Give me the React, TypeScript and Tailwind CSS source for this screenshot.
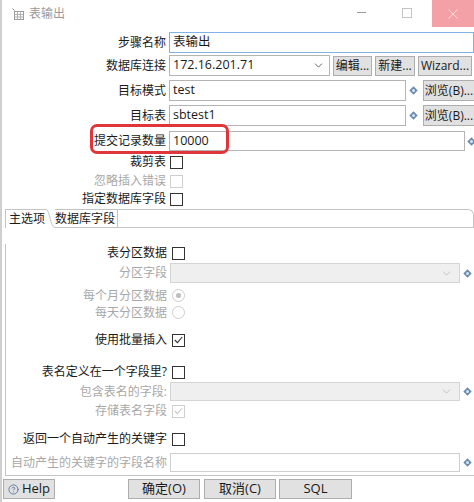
import { ChevronDown, CircleHelp } from "lucide-react";
import type { ReactNode } from "react";

// Small blue marker shown after fields that accept variables
function VarMark() {
  return (
    <svg width="9" height="9" viewBox="0 0 9 9" className="shrink-0">
      <path d="M4.5 0.3 L8.7 4.5 L4.5 8.7 L0.3 4.5 Z" fill="#6a8cb2" />
      <circle cx="4.5" cy="4.5" r="1.5" fill="#d6e4f2" />
    </svg>
  );
}

function Check({ checked = false, disabled = false }: { checked?: boolean; disabled?: boolean }) {
  return (
    <span
      className={`flex h-[13px] w-[13px] shrink-0 items-center justify-center border bg-white ${
        disabled ? "border-[#cfcfcf]" : "border-[#333333]"
      }`}
    >
      {checked && (
        <svg width="9" height="8" viewBox="0 0 9 8">
          <path d="M0.8 4 L3.4 6.6 L8.2 1" fill="none" stroke={disabled ? "#c8c8c8" : "#333333"} strokeWidth="1.1" />
        </svg>
      )}
    </span>
  );
}

function Radio({ checked = false }: { checked?: boolean }) {
  return (
    <span className="flex h-[13px] w-[13px] shrink-0 items-center justify-center rounded-full border border-[#cfcfcf] bg-white">
      {checked && <span className="h-[5px] w-[5px] rounded-full bg-[#bdbdbd]" />}
    </span>
  );
}

function Btn({ children, className = "" }: { children: ReactNode; className?: string }) {
  return (
    <div
      className={`flex items-center justify-center border border-[#adadad] bg-[#e1e1e1] text-[12px] text-[#1a1a1a] ${className}`}
    >
      {children}
    </div>
  );
}

// Label column + control, top part of the dialog
function Row({ label, children, className = "", muted = false }: { label: string; children: ReactNode; className?: string; muted?: boolean }) {
  return (
    <div className={`flex items-center ${className}`}>
      <div className={`w-[164px] shrink-0 text-right text-[12px] ${muted ? "text-[#a8a8a8]" : "text-[#1a1a1a]"}`}>{label}</div>
      <div className="ml-[3px] flex h-full flex-1 items-center">{children}</div>
    </div>
  );
}

// Same, inside the tab panel (panel is offset by its left border)
function PanelRow({ label, children, className = "", muted = false }: { label: string; children: ReactNode; className?: string; muted?: boolean }) {
  return (
    <div className={`flex items-center ${className}`}>
      <div className={`w-[161px] shrink-0 text-right text-[12px] ${muted ? "text-[#a8a8a8]" : "text-[#1a1a1a]"}`}>{label}</div>
      <div className="ml-[3px] flex h-full flex-1 items-center">{children}</div>
    </div>
  );
}

function DisabledCombo() {
  return (
    <div className="flex h-full items-center">
      <div className="flex h-full w-[290px] items-center justify-end border border-[#d4d4d4] bg-[#efefef] pr-[6px]">
        <ChevronDown size={13} strokeWidth={1.5} color="#b8b8b8" />
      </div>
      <div className="ml-[3px]">
        <VarMark />
      </div>
    </div>
  );
}

export default function App() {
  return (
    <div className="relative h-[502px] w-[474px] overflow-hidden border-l-2 border-[#cfcfcf] bg-white font-['Open_Sans','Noto_Sans_CJK_SC',sans-serif] text-[#1a1a1a]">
      {/* title bar */}
      <div className="flex h-[30px] items-start">
        <svg width="12" height="12" viewBox="0 0 12 12" className="ml-[10px] mt-[8px]">
          <path d="M0.5 0.5 L2.5 2.5" stroke="#8a8a8a" />
          <rect x="2.5" y="3.5" width="9" height="8" fill="none" stroke="#9a9a9a" />
          <path d="M2.5 6.5 H11.5 M2.5 9 H11.5 M5.5 3.5 V11.5 M8.5 3.5 V11.5" stroke="#b0b0b0" />
        </svg>
        <span className="ml-[5px] mt-[5px] text-[12px] text-[#9a9a9a]">表输出</span>
        <div className="flex-1" />
        <div className="mt-[12px] h-px w-[9px] bg-[#9a9a9a]" />
        <div className="ml-[36px] mt-[8px] h-[10px] w-[10px] border border-[#c4c4c4]" />
        <div className="ml-[20px] flex h-[27px] w-[42px] items-center justify-center bg-[#f3a0a7]">
          <svg width="10" height="10" viewBox="0 0 10 10">
            <path d="M0.5 0.5 L9.5 9.5 M9.5 0.5 L0.5 9.5" stroke="#fbd9dc" strokeWidth="1" />
          </svg>
        </div>
      </div>

      <Row label="步骤名称" className="mt-[2px] h-[21px]">
        <div className="flex h-full flex-1 items-center border border-[#7fb2e5] pl-[3px] text-[12.5px]">表输出</div>
      </Row>

      <Row label="数据库连接" className="mt-[2px] h-[21px]">
        <div className="flex h-full w-[161px] items-center justify-between border border-[#b4b4b4] pl-[3px] pr-[4px] text-[12.5px]">
          <span>172.16.201.71</span>
          <ChevronDown size={13} strokeWidth={1.6} color="#555" />
        </div>
        <Btn className="ml-[3px] h-[20px] w-[39px]">编辑...</Btn>
        <Btn className="ml-[3px] h-[20px] w-[40px]">新建...</Btn>
        <Btn className="ml-[3px] h-[20px] w-[54px] text-[12.5px]">Wizard...</Btn>
      </Row>

      <Row label="目标模式" className="mt-[4px] h-[21px]">
        <div className="flex h-full w-[237px] items-center border border-[#b4b4b4] pl-[3px] text-[12.5px]">test</div>
        <div className="ml-[3px]">
          <VarMark />
        </div>
        <Btn className="ml-[5px] h-[21px] w-[52px]">浏览(B)...</Btn>
      </Row>

      <Row label="目标表" className="mt-[4px] h-[21px]">
        <div className="flex h-full w-[237px] items-center border border-[#b4b4b4] pl-[3px] text-[12.5px]">sbtest1</div>
        <div className="ml-[3px]">
          <VarMark />
        </div>
        <Btn className="ml-[5px] h-[21px] w-[52px]">浏览(B)...</Btn>
      </Row>

      <Row label="提交记录数量" className="mt-[5px] h-[20px]">
        <div className="flex h-full w-[296px] items-center border border-[#b4b4b4] pl-[3px] text-[12.5px]">10000</div>
        <div className="ml-[2px]">
          <VarMark />
        </div>
      </Row>

      <Row label="裁剪表" className="mt-[2px] h-[18px]">
        <span className="ml-px">
          <Check />
        </span>
      </Row>
      <Row label="忽略插入错误" muted className="mt-px h-[18px]">
        <span className="ml-px">
          <Check disabled />
        </span>
      </Row>
      <Row label="指定数据库字段" className="h-[18px]">
        <span className="ml-px">
          <Check />
        </span>
      </Row>

      {/* tab folder */}
      <div className="ml-[3px] mt-px flex h-[19px] text-[12px]">
        <div className="flex h-full items-center border-l border-t border-[#c4c4c4] pl-[3px] pr-[1px]">主选项</div>
        <svg width="9" height="19" viewBox="0 0 9 19" className="shrink-0">
          <path d="M0 0.5 C4 0.5 4 18.5 9 18.5" stroke="#c4c4c4" fill="none" />
        </svg>
        <div className="flex h-full items-center border-b border-r border-t border-[#c4c4c4] pr-[2px]">数据库字段</div>
        <div className="h-full flex-1 rounded-tr-[6px] border-b border-r border-t border-[#c4c4c4]" />
      </div>

      <div className="ml-[3px] border-b border-l border-[#c4c4c4] pb-[3px]">
        <PanelRow label="表分区数据" className="mt-[16px] h-[18px]">
          <span className="ml-[2px]">
            <Check />
          </span>
        </PanelRow>
        <PanelRow label="分区字段" muted className="mt-px h-[20px]">
          <DisabledCombo />
        </PanelRow>
        <PanelRow label="每个月分区数据" muted className="mt-[4px] h-[17px]">
          <span className="ml-[2px]">
            <Radio checked />
          </span>
        </PanelRow>
        <PanelRow label="每天分区数据" muted className="h-[17px]">
          <span className="ml-[2px]">
            <Radio />
          </span>
        </PanelRow>
        <PanelRow label="使用批量插入" className="mt-[10px] h-[18px]">
          <span className="ml-[2px]">
            <Check checked />
          </span>
        </PanelRow>
        <PanelRow label="表名定义在一个字段里?" className="mt-[14px] h-[18px]">
          <span className="ml-[2px]">
            <Check />
          </span>
        </PanelRow>
        <PanelRow label="包含表名的字段:" muted className="mt-px h-[19px]">
          <DisabledCombo />
        </PanelRow>
        <PanelRow label="存储表名字段" muted className="mt-px h-[18px]">
          <span className="ml-[2px]">
            <Check checked disabled />
          </span>
        </PanelRow>
        <PanelRow label="返回一个自动产生的关键字" className="mt-[10px] h-[18px]">
          <span className="ml-[2px]">
            <Check />
          </span>
        </PanelRow>
        <PanelRow label="自动产生的关键字的字段名称" muted className="mt-[5px] h-[19px]">
          <div className="h-full w-[290px] border border-[#cfcfcf] bg-white" />
          <div className="ml-[3px]">
            <VarMark />
          </div>
        </PanelRow>
      </div>

      {/* dialog buttons */}
      <div className="mt-[3px] flex h-[20px] items-center">
        <Btn className="ml-px h-full w-[52px] gap-[3px] text-[13px]">
          <CircleHelp size={11} strokeWidth={1.6} color="#3c5f8c" />
          <span>Help</span>
        </Btn>
        <Btn className="ml-[73px] h-full w-[72px] text-[13px]">确定(O)</Btn>
        <Btn className="ml-[4px] h-full w-[72px] text-[13px]">取消(C)</Btn>
        <Btn className="ml-[3px] h-full w-[73px] text-[13px]">SQL</Btn>
      </div>

      {/* highlight around the commit size field */}
      <div className="pointer-events-none absolute left-[88px] top-[124px] h-[30px] w-[139px] rounded-[7px] border-[3px] border-[#e0353a]" />
    </div>
  );
}
